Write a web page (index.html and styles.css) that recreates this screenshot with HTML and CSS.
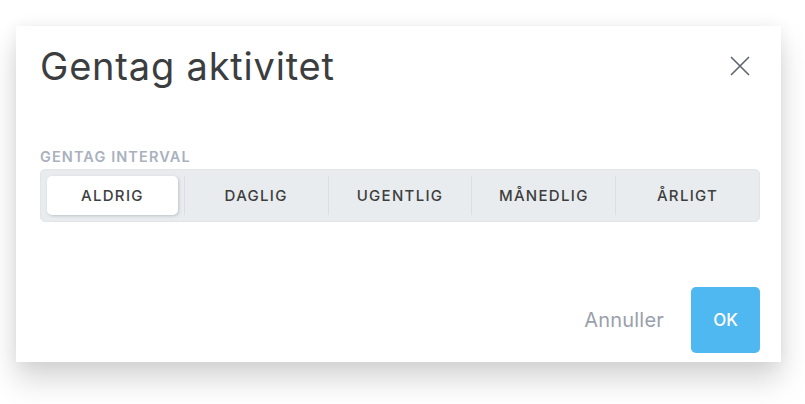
FILE: index.html
```html
<!DOCTYPE html>
<html lang="da">
<head>
<meta charset="utf-8">
<title>Gentag aktivitet</title>
<link rel="stylesheet" href="styles.css">
</head>
<body>
<div class="dialog">
  <header class="dialog-header">
    <h1 class="dialog-title">Gentag aktivitet</h1>
    <button class="close-btn" aria-label="Luk">
      <svg width="20" height="20" viewBox="0 0 20 20"><path d="M1 1 L19 19 M19 1 L1 19" stroke="#5d6371" stroke-width="1.6" fill="none"/></svg>
    </button>
  </header>
  <div class="dialog-body">
    <div class="field-label">GENTAG INTERVAL</div>
    <div class="segmented">
      <div class="seg active"><span class="seg-inner">ALDRIG</span></div>
      <div class="sep"></div>
      <div class="seg"><span class="seg-inner">DAGLIG</span></div>
      <div class="sep"></div>
      <div class="seg"><span class="seg-inner">UGENTLIG</span></div>
      <div class="sep"></div>
      <div class="seg"><span class="seg-inner">MÅNEDLIG</span></div>
      <div class="sep"></div>
      <div class="seg"><span class="seg-inner">ÅRLIGT</span></div>
    </div>
  </div>
  <footer class="dialog-footer">
    <button class="btn-cancel">Annuller</button>
    <button class="btn-ok">OK</button>
  </footer>
</div>
</body>
</html>
```
FILE: styles.css
```css
html, body {
  margin: 0;
  padding: 0;
  background: #ffffff;
}
body {
  font-family: "Inter", "Noto Sans", sans-serif;
  padding: 26px 24px 42px 16px;
  min-height: 404px;
  box-sizing: border-box;
}
.dialog {
  width: 765px;
  height: 336px;
  box-sizing: border-box;
  background: #ffffff;
  padding: 17px 21px 9px 24px;
  display: flex;
  flex-direction: column;
  box-shadow: 0 18px 28px rgba(0,0,0,0.16), 0 0 16px rgba(0,0,0,0.06);
}
.dialog-header {
  display: flex;
  align-items: center;
  justify-content: space-between;
}
.dialog-title {
  margin: 0;
  font-size: 38px;
  line-height: 46px;
  font-weight: 400;
  letter-spacing: 0.8px;
  color: #3c3d3f;
}
.close-btn {
  border: 0;
  background: none;
  padding: 0;
  margin-right: 10px;
  width: 20px;
  height: 20px;
  display: flex;
}
.dialog-body {
  margin-top: 59px;
}
.field-label {
  font-size: 14.5px;
  line-height: 17px;
  font-weight: 600;
  color: #a9b1bf;
  letter-spacing: 1.1px;
}
.segmented {
  margin-top: 4px;
  display: flex;
  height: 53px;
  box-sizing: border-box;
  background: #e9ecee;
  border: 1px solid #e1e5e8;
  border-radius: 5px;
}
.seg {
  flex: 1;
  display: flex;
  padding: 6px 6px;
}
.seg-inner {
  flex: 1;
  display: flex;
  align-items: center;
  justify-content: center;
  border-radius: 5px;
  font-size: 15px;
  font-weight: 500;
  letter-spacing: 1.3px;
  color: #3d3e40;
}
.seg.active .seg-inner {
  background: #ffffff;
  box-shadow: 1px 1px 3px rgba(60,70,90,0.25);
}
.sep {
  width: 1px;
  margin: 6px 0;
  background: #dcdfe2;
}
.dialog-footer {
  margin-top: auto;
  display: flex;
  justify-content: flex-end;
  align-items: center;
}
.btn-cancel {
  border: 0;
  background: none;
  font-family: inherit;
  font-size: 20px;
  letter-spacing: 0.2px;
  color: #9aa0ad;
  padding: 0;
  margin-right: 27px;
}
.btn-ok {
  border: 0;
  width: 69px;
  height: 66px;
  border-radius: 5px;
  background: #4fb8f0;
  color: #ffffff;
  font-family: inherit;
  font-size: 17px;
  font-weight: 500;
}
```
